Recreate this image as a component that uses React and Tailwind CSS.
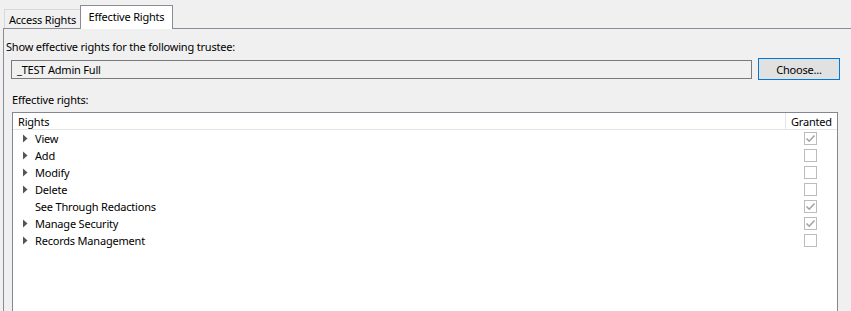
import React from "react";

const rights = [
  { name: "View", expandable: true, granted: true },
  { name: "Add", expandable: true, granted: false },
  { name: "Modify", expandable: true, granted: false },
  { name: "Delete", expandable: true, granted: false },
  { name: "See Through Redactions", expandable: false, granted: true },
  { name: "Manage Security", expandable: true, granted: true },
  { name: "Records Management", expandable: true, granted: false },
];

const Arrow = () => (
  <svg width="5" height="9" viewBox="0 0 5 9" className="block">
    <path d="M0 0.5 L4.5 4.5 L0 8.5 Z" fill="#555555" />
  </svg>
);

const CheckBox = ({ checked }) => (
  <div className="w-[13px] h-[13px] border border-[#bcbcbc] bg-white flex items-center justify-center">
    {checked && (
      <svg width="11" height="11" viewBox="0 0 11 11">
        <path d="M1.5 5.5 L4.2 8.2 L9.5 2.5" fill="none" stroke="#a3a3a3" strokeWidth="1.6" />
      </svg>
    )}
  </div>
);

export default function App() {
  return (
    <div
      className="w-[851px] h-[311px] bg-[#f0f0f0] overflow-hidden text-[11px] tracking-[-0.2px] text-black leading-[15px]"
      style={{ fontFamily: '"Noto Sans", sans-serif' }}
    >
      {/* Tabs */}
      <div className="h-[28px] flex items-end pl-[4px] relative z-10">
        <div className="h-[19px] w-[76px] border-t border-l border-[#d9d9d9] bg-[#f0f0f0] flex items-center justify-center">
          Access Rights
        </div>
        <div className="h-[24px] w-[93px] -mb-px border-t border-l border-r border-[#898c95] bg-white flex items-center justify-center pb-[2px]">
          Effective Rights
        </div>
      </div>

      {/* Tab page */}
      <div className="ml-[3px] h-[300px] border-t border-l border-[#898c95] pt-[10px] pl-[2px]">
        <div className="h-[15px]">Show effective rights for the following trustee:</div>

        <div className="mt-[4px] flex items-center pl-[5px]">
          <div className="w-[741px] h-[19px] border border-[#7a7a7a] bg-[#f0f0f0] flex items-center pl-[5px]">
            _TEST Admin Full
          </div>
          <button className="ml-[6px] w-[82px] h-[22px] border border-[#0078d7] bg-[#e1e1e1] flex items-center justify-center">
            Choose...
          </button>
        </div>

        <div className="mt-[12px] pl-[6px] h-[15px]">Effective rights:</div>

        <div className="mt-[5px] ml-[6px] w-[826px] h-[220px] border border-[#828790] bg-white">
          <div className="h-[17px] flex border-b border-[#e5e5e5]">
            <div className="flex-1 pl-[5px] flex items-center">Rights</div>
            <div className="w-[52px] border-l border-[#e5e5e5] pl-[5px] flex items-center">Granted</div>
          </div>
          {rights.map((r) => (
            <div key={r.name} className="h-[17px] flex items-center">
              <div className="w-[22px] pl-[10px] flex items-center">{r.expandable && <Arrow />}</div>
              <div className="flex-1">{r.name}</div>
              <div className="w-[52px] pl-[19px]">
                <CheckBox checked={r.granted} />
              </div>
            </div>
          ))}
        </div>
      </div>
    </div>
  );
}
